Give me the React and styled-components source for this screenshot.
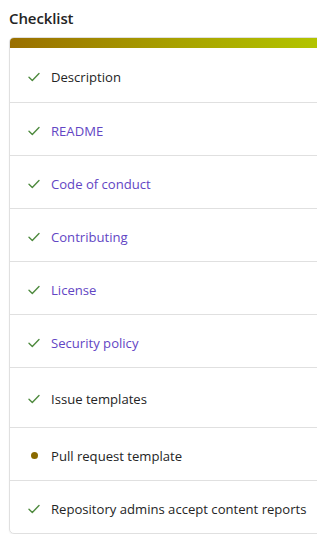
import React from "react";
import styled, { createGlobalStyle } from "styled-components";

const Global = createGlobalStyle`
  html, body { margin: 0; padding: 0; background: #fff; overflow: hidden; }
  body { font-family: "Open Sans", "Noto Sans", sans-serif; color: #242424; }
`;

const Page = styled.div`
  padding: 8px 0 0 9px;
  width: 340px;
`;

const Title = styled.h2`
  margin: 0 0 9px 0;
  font-size: 15px;
  font-weight: 600;
  line-height: 20px;
  color: #242424;
  letter-spacing: -0.1px;
`;

const Card = styled.div`
  border: 1px solid #e0e0e0;
  border-radius: 5px;
  overflow: hidden;
  background: #fff;
  box-shadow: 0 1px 2px rgba(0,0,0,0.06);
`;

const Bar = styled.div`
  height: 10px;
  background: linear-gradient(90deg, #9a6f00 0%, #a8a200 50%, #b5cc00 100%);
`;

const Row = styled.div`
  display: flex;
  align-items: center;
  height: ${(p) => p.$h || 53}px;
  padding: 3px 0 0 18px;
  border-top: ${(p) => (p.$first ? "none" : "1px solid #e0e0e0")};
  box-sizing: border-box;
  gap: 11px;
`;

const IconBox = styled.span`
  width: 12px;
  display: flex;
  align-items: center;
  justify-content: center;
`;

const Label = styled.span`
  font-size: 13.1px;
  line-height: 18px;
  color: ${(p) => (p.$link ? "#6245c4" : "#242424")};
`;

const Dot = styled.span`
  width: 7px;
  height: 7px;
  border-radius: 50%;
  background: #8a6a00;
`;

const Check = () => (
  <svg width="12" height="10" viewBox="0 0 12 10" fill="none">
    <path d="M1 5.2 L4.3 8.4 L11 1.6" stroke="#4e8a3e" strokeWidth="1.4" strokeLinecap="round" strokeLinejoin="round" />
  </svg>
);

const items = [
  { t: "Description", link: false, h: 54 },
  { t: "README", link: true },
  { t: "Code of conduct", link: true },
  { t: "Contributing", link: true },
  { t: "License", link: true },
  { t: "Security policy", link: true },
  { t: "Issue templates", link: false, h: 60 },
  { t: "Pull request template", link: false, dot: true },
  { t: "Repository admins accept content reports", link: false, h: 53 },
];

export default function App() {
  return (
    <>
      <Global />
      <Page>
        <Title>Checklist</Title>
        <Card>
          <Bar />
          {items.map((it, i) => (
            <Row key={it.t} $first={i === 0} $h={it.h}>
              <IconBox>{it.dot ? <Dot /> : <Check />}</IconBox>
              <Label $link={it.link}>{it.t}</Label>
            </Row>
          ))}
        </Card>
      </Page>
    </>
  );
}
